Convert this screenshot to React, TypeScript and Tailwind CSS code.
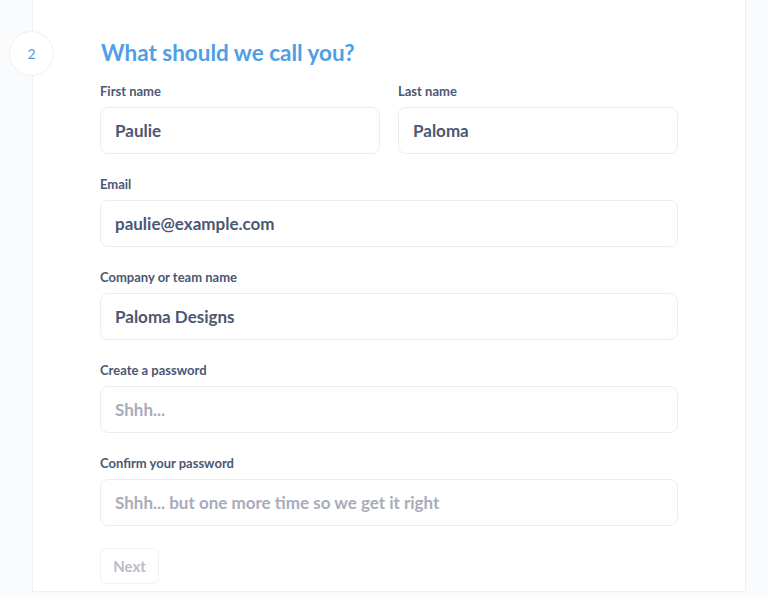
const FIELD = 'w-full h-[47px] rounded-lg border border-[#ebeef0] bg-white px-[14px] text-[17px] font-bold text-[#4c5773] placeholder:text-[#a7adb9] outline-none';

function Field({ label, value, placeholder }: { label: string; value?: string; placeholder?: string }) {
  return (
    <div className="flex flex-col">
      <label className="mb-2 text-[13px] leading-4 font-bold text-[#4c5773]">{label}</label>
      <input type="text" defaultValue={value} placeholder={placeholder} className={FIELD} />
    </div>
  );
}

export default function App() {
  return (
    <div className="min-h-[599px] bg-[#f9fbfc] font-['Lato',sans-serif]">
      <div className="relative ml-[32px] w-[714px] h-[592px] bg-white border-x border-b border-[#eef0f2]">
        {/* step number */}
        <div className="absolute left-[-24px] top-[31px] flex h-[45px] w-[45px] items-center justify-center rounded-full border border-[#eef0f2] bg-white text-[14px] text-[#509ee3]">
          2
        </div>

        <div className="pl-[67px] pt-[40px] w-[645px]">
          <h1 className="ml-px text-[22.5px] leading-[26px] font-bold text-[#509ee3]">What should we call you?</h1>

          <div className="mt-[17px] flex flex-col gap-[22px]">
            <div className="grid grid-cols-2 gap-[18px]">
              <Field label="First name" value="Paulie" />
              <Field label="Last name" value="Paloma" />
            </div>
            <Field label="Email" value="paulie@example.com" />
            <Field label="Company or team name" value="Paloma Designs" />
            <Field label="Create a password" placeholder="Shhh..." />
            <Field label="Confirm your password" placeholder="Shhh... but one more time so we get it right" />
            <div>
              <button className="h-[36px] w-[59px] rounded-md border border-[#f0f2f4] text-[15px] font-bold text-[#b8bdc6]">
                Next
              </button>
            </div>
          </div>
        </div>
      </div>
    </div>
  );
}
